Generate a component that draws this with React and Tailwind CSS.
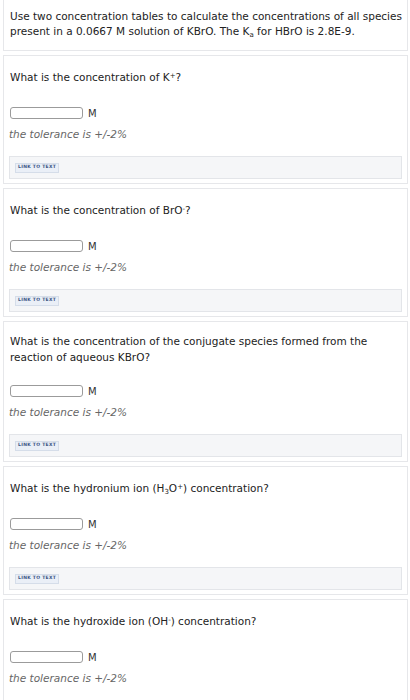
const font = { fontFamily: '"DejaVu Sans", Verdana, sans-serif' }

const sub = 'text-[7px] leading-[0]'
const sup = 'text-[7px] leading-[0]'

function Answer({ tight = false }) {
  return (
    <div>
      <div className={`flex items-center h-[12px] ${tight ? 'mt-[20px]' : 'mt-[22px]'}`}>
        <input
          type="text"
          className="w-[73px] h-[12px] ml-[1px] border border-[#9b9b9b] rounded-[3px] bg-white outline-none"
        />
        <span className="ml-[5px] text-[10px] text-[#333]">M</span>
      </div>
      <p className="mt-[8px] text-[10.5px] leading-[14px] italic text-[#666]">the tolerance is +/-2%</p>
    </div>
  )
}

function LinkBox() {
  return (
    <div className="mt-[15px] h-[23px] border border-[#e3e5e9] bg-[#f5f6f8] flex items-center px-[5px]">
      <span className="px-[2px] h-[10px] flex items-center bg-[#eaeff7] border border-[#d5dde9] text-[4.5px] font-bold tracking-[0.3px] text-[#3b5584] leading-none">
        LINK TO TEXT
      </span>
    </div>
  )
}

function Card({ children, link = true, first = false, pt = 'pt-[14px]' }) {
  return (
    <div
      className={`ml-[3px] mr-[2px] border border-[#e6e7ea] bg-white px-[5px] ${first ? 'border-t-0 pt-[9px] pb-[11px]' : `${pt} pb-[4px] mt-[4px]`}`}
    >
      {children}
      {link && <LinkBox />}
    </div>
  )
}

export default function App() {
  return (
    <div className="w-[410px] h-[700px] overflow-hidden bg-white text-[#222]" style={font}>
      <Card first link={false}>
        <p className="pl-[1px] text-[10.5px] leading-[15px]">
          Use two concentration tables to calculate the concentrations of all species present in a 0.0667 M solution of KBrO. The K<sub className={sub}>a</sub> for HBrO is 2.8E-9.
        </p>
      </Card>
      <Card>
        <p className="pl-[1px] text-[10.5px] leading-[15px]">
          What is the concentration of K<sup className={sup}>+</sup>?
        </p>
        <Answer />
      </Card>
      <Card>
        <p className="pl-[1px] text-[10.5px] leading-[15px]">
          What is the concentration of BrO<sup className={sup}>-</sup>?
        </p>
        <Answer />
      </Card>
      <Card pt="pt-[12px]">
        <p className="pl-[1px] text-[10.5px] leading-[15.5px]">
          What is the concentration of the conjugate species formed from the reaction of aqueous KBrO?
        </p>
        <Answer tight />
      </Card>
      <Card>
        <p className="pl-[1px] text-[10.5px] leading-[15px]">
          What is the hydronium ion (H<sub className={sub}>3</sub>O<sup className={sup}>+</sup>) concentration?
        </p>
        <Answer />
      </Card>
      <Card>
        <p className="pl-[1px] text-[10.5px] leading-[15px]">
          What is the hydroxide ion (OH<sup className={sup}>-</sup>) concentration?
        </p>
        <Answer />
      </Card>
    </div>
  )
}
